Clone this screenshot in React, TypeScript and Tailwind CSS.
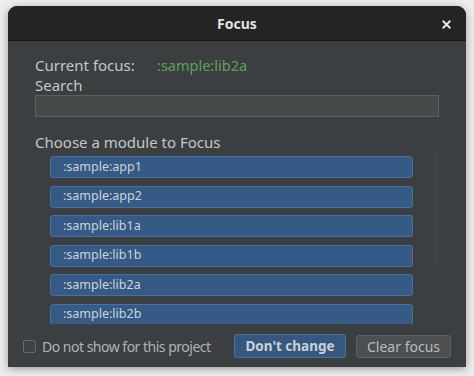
import { X } from 'lucide-react';

const modules = [':sample:app1', ':sample:app2', ':sample:lib1a', ':sample:lib1b', ':sample:lib2a', ':sample:lib2b'];

export default function App() {
  return (
    <div
      className="w-[474px] h-[376px] bg-[#ededed] pt-[6px] pl-[8px] overflow-hidden"
      style={{ fontFamily: "'Noto Sans', 'Open Sans', sans-serif" }}
    >
      <div className="w-[458px] h-[361px] flex flex-col rounded-t-[9px] overflow-hidden bg-[#3c3f41] shadow-[0_2px_8px_rgba(0,0,0,0.35)]">
        {/* title bar */}
        <div className="relative h-[35px] shrink-0 flex items-center justify-center bg-[#242424] border-b border-[#151515]">
          <span className="text-[14px] font-bold text-[#e2e2e2]">Focus</span>
          <X size={13} strokeWidth={3.5} className="absolute right-[13px] top-[12px] text-[#e8e8e8]" />
        </div>

        <div className="flex-1 flex flex-col pl-[27px] pr-[27px] pt-[14px]">
          <div className="flex items-center h-[20px] text-[15px] leading-[20px]">
            <span className="w-[122px] text-[#c4c7c9]">Current focus:</span>
            <span className="text-[#5e9f5c] text-[14.5px]">:sample:lib2a</span>
          </div>
          <div className="h-[20px] text-[15px] leading-[20px] text-[#c4c7c9]">Search</div>
          <div className="h-[22px] w-[404px] bg-[#45494a] border border-[#5b5f61]" />

          <div className="mt-[15px] h-[20px] text-[15px] leading-[20px] text-[#c4c7c9]">Choose a module to Focus</div>

          <div className="h-[172px] flex">
            <div className="w-[398px] overflow-hidden pl-[15px] pt-[4px] flex flex-col gap-[7.5px]">
              {modules.map((m) => (
                <div
                  key={m}
                  className="shrink-0 w-[363px] h-[22px] flex items-center pl-[12px] rounded-[3px] bg-[#365a86] border border-[#4b709b] text-[12.5px] text-[#cdd3d9]"
                >
                  {m}
                </div>
              ))}
            </div>
            <div className="w-[6px] h-[111px] bg-[#414446] rounded-[2px]" />
          </div>

          <div className="mt-[8px] flex items-center h-[28px] -ml-[12px]">
            <div className="shrink-0 w-[13px] h-[13px] border border-[#64686a] rounded-[2px] bg-[#3f4244]" />
            <span className="ml-[6px] w-[192px] shrink-0 whitespace-nowrap text-[14px] text-[#b0b3b5] tracking-[-0.5px]">
              Do not show for this project
            </span>
            <button className="shrink-0 w-[112px] h-[24px] rounded-[3px] bg-[#365880] border border-[#4d7299] text-[13.5px] font-bold text-[#cbd0d5] whitespace-nowrap">
              Don't change
            </button>
            <button className="shrink-0 ml-[10px] w-[95px] h-[23px] rounded-[3px] bg-[#4b4f51] border border-[#5d6163] text-[14px] text-[#b9bcbe] whitespace-nowrap">
              Clear focus
            </button>
          </div>
        </div>
      </div>
    </div>
  );
}
